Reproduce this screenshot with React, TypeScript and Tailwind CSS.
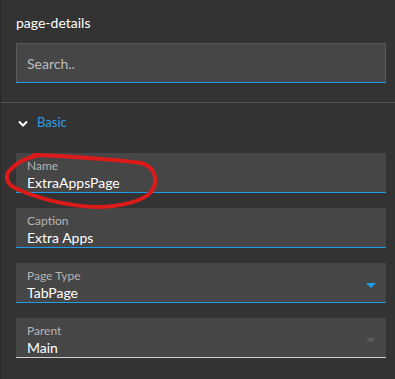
import React from "react";

function Field({ label, value, dropdown, active }: { label: string; value: string; dropdown?: boolean; active?: boolean }) {
  return (
    <div className={`relative h-[40px] bg-[#464646] border-b ${active === false ? "border-[#cfcfcf]" : "border-[#1e9be9]"} pl-[11px] pt-[5px]`}>
      <div className="text-[12px] leading-[16px] text-[#b4b4b4]">{label}</div>
      <div className="text-[14px] leading-[18px] text-white">{value}</div>
      {dropdown && (
        <svg className="absolute right-[10px] top-[20px]" width="10" height="5" viewBox="0 0 10 5">
          <polygon points="0,0 10,0 5,5" fill={active === false ? "#5c5c5c" : "#1e9be9"} />
        </svg>
      )}
    </div>
  );
}

export default function App() {
  return (
    <div
      className="relative w-[395px] h-[379px] bg-[#333333] border-l border-[#2a2a2a] overflow-hidden"
      style={{ fontFamily: '"Lato", "Noto Sans", sans-serif' }}
    >
      <div className="pl-[15px] pr-[9px] pt-[14px]">
        <div className="text-[14px] leading-[18px] text-white">page-details</div>
        <div className="mt-[11px] h-[40px] bg-[#464646] border border-[#5a5a5a] border-b-0 flex flex-col">
          <div className="flex-1 flex items-center pl-[10px] text-[14px] text-[#bdbdbd]">Search..</div>
          <div className="h-[1px] bg-[#1e9be9] -mx-[1px]"></div>
        </div>
      </div>
      <div className="mt-[19px] h-[1px] bg-[#505050]"></div>
      <div className="pl-[15px] flex items-center h-[40px]">
        <svg width="10" height="7" viewBox="0 0 10 7" className="ml-[2px]">
          <polyline points="1,1.5 5,5.5 9,1.5" fill="none" stroke="#ffffff" strokeWidth="2" />
        </svg>
        <span className="ml-[9px] text-[13px] text-[#2e9fe6]">Basic</span>
      </div>
      <div className="pl-[15px] pr-[9px] mt-[10px] flex flex-col gap-[15px]">
        <Field label="Name" value="ExtraAppsPage" />
        <Field label="Caption" value="Extra Apps" />
        <Field label="Page Type" value="TabPage" dropdown />
        <Field label="Parent" value="Main" dropdown active={false} />
      </div>
      <svg className="absolute left-0 top-0 pointer-events-none" width="395" height="379" viewBox="0 0 395 379">
        <path
          d="M33,155 C60,156 100,158 140,163 C156,167 157,183 150,192 C142,201 120,207 95,207 C65,206 35,198 14,188 C4,183 4,174 10,169 C16,163 25,158 35,156"
          fill="none"
          stroke="#dc1a1a"
          strokeWidth="4"
          strokeLinecap="round"
        />
      </svg>
    </div>
  );
}
